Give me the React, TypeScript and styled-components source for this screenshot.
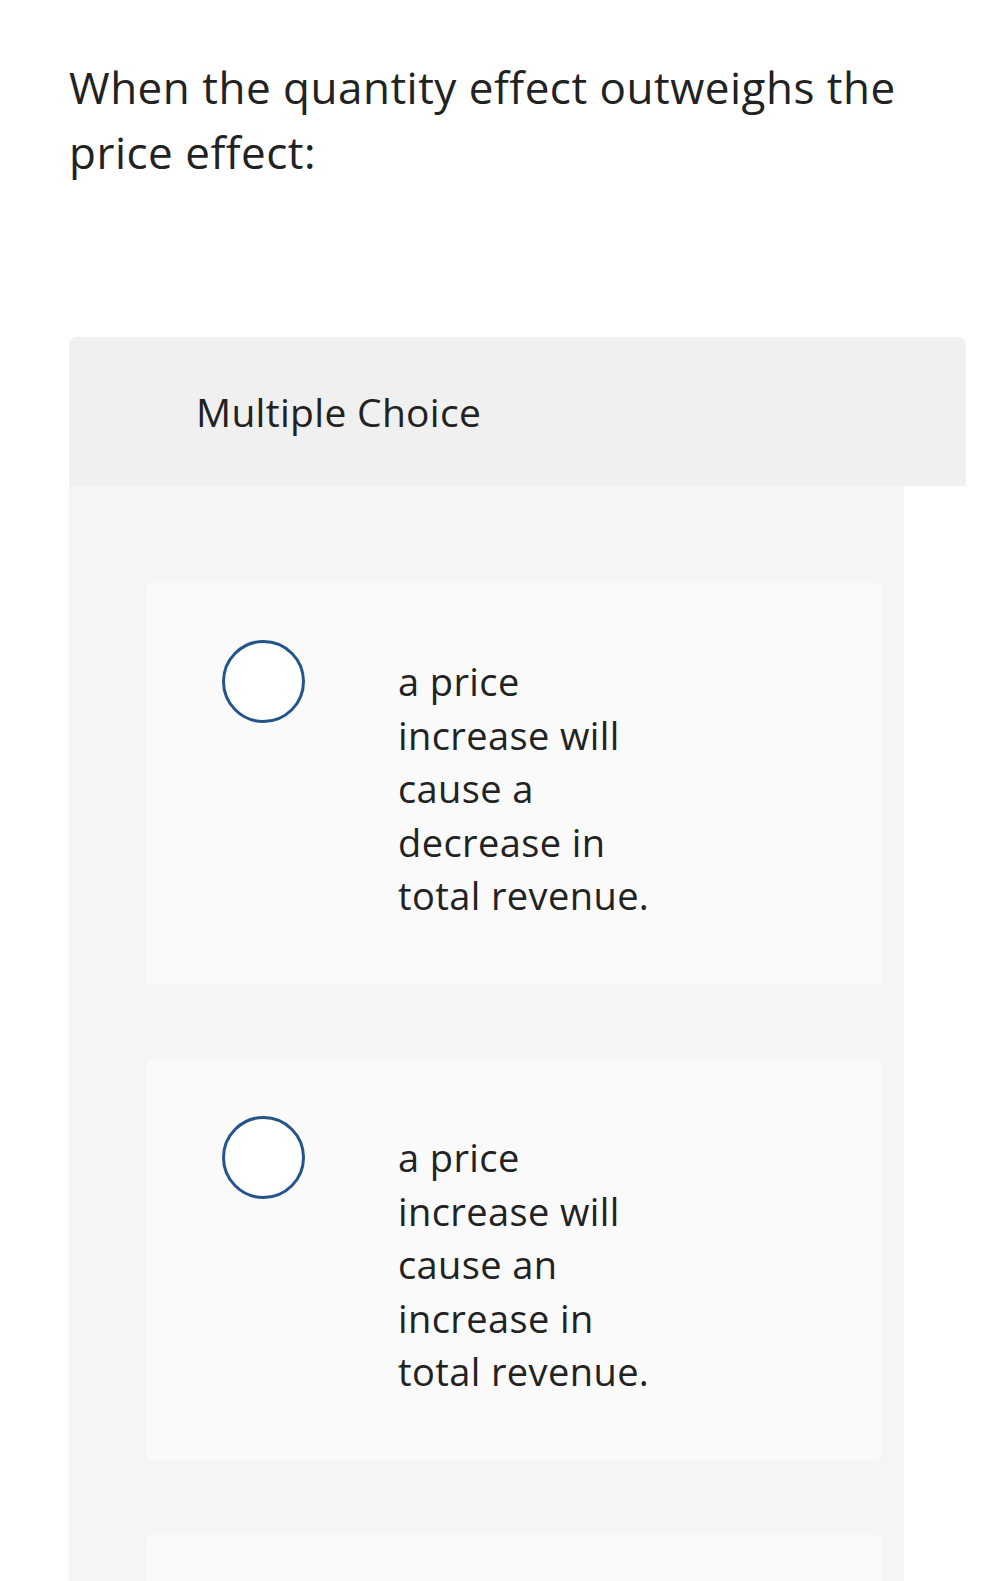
import React from "react";
import styled, { createGlobalStyle } from "styled-components";

const Global = createGlobalStyle`
  html, body {
    margin: 0;
    padding: 0;
    background: #ffffff;
  }
  body {
    font-family: "Open Sans", Lato, "Liberation Sans", sans-serif;
    color: #222222;
    -webkit-font-smoothing: antialiased;
  }
`;

const Page = styled.main`
  padding: 55px 30px 0 69px;
  height: 1581px;
  overflow: hidden;
  box-sizing: border-box;
`;

const Prompt = styled.h1`
  margin: 0;
  width: 897px;
  font-size: 44px;
  letter-spacing: 0.5px;
  line-height: 65px;
  font-weight: 400;
  color: #222222;
`;

const Question = styled.section`
  margin-top: 152px;
  display: flex;
  flex-direction: column;
  align-items: flex-start;
`;

const TypeHeader = styled.header`
  width: 897px;
  height: 149px;
  box-sizing: border-box;
  display: flex;
  align-items: center;
  padding-left: 127px;
  background: #f0f0f0;
  border-radius: 8px 8px 0 0;
  font-size: 39px;
  letter-spacing: 0.3px;
  color: #222222;
`;

const Choices = styled.div`
  width: 835px;
  box-sizing: border-box;
  padding: 97px 22px 0 77px;
  background: #f5f5f5;
  display: flex;
  flex-direction: column;
  gap: 75px;
  min-height: 1200px;
`;

const ChoiceCard = styled.label`
  display: flex;
  align-items: flex-start;
  box-sizing: border-box;
  height: 401px;
  padding: 57px 0 0 76px;
  background: #fafafa;
  border-radius: 6px;
  cursor: pointer;
`;

const Radio = styled.span`
  flex: none;
  width: 83px;
  height: 83px;
  box-sizing: border-box;
  border-radius: 50%;
  border: 3px solid #24548c;
  background: #ffffff;
`;

const ChoiceText = styled.span`
  margin-left: 93px;
  margin-top: 15px;
  width: 262px;
  font-size: 38px;
  letter-spacing: 0.4px;
  line-height: 53.6px;
  color: #222222;
`;

const choices = [
  "a price increase will cause a decrease in total revenue.",
  "a price increase will cause an increase in total revenue.",
  "",
];

export default function App() {
  return (
    <>
      <Global />
      <Page>
        <Prompt>When the quantity effect outweighs the price effect:</Prompt>
        <Question>
          <TypeHeader>Multiple Choice</TypeHeader>
          <Choices>
            {choices.map((c, i) => (
              <ChoiceCard key={i}>
                {c && <Radio />}
                {c && <ChoiceText>{c}</ChoiceText>}
              </ChoiceCard>
            ))}
          </Choices>
        </Question>
      </Page>
    </>
  );
}
